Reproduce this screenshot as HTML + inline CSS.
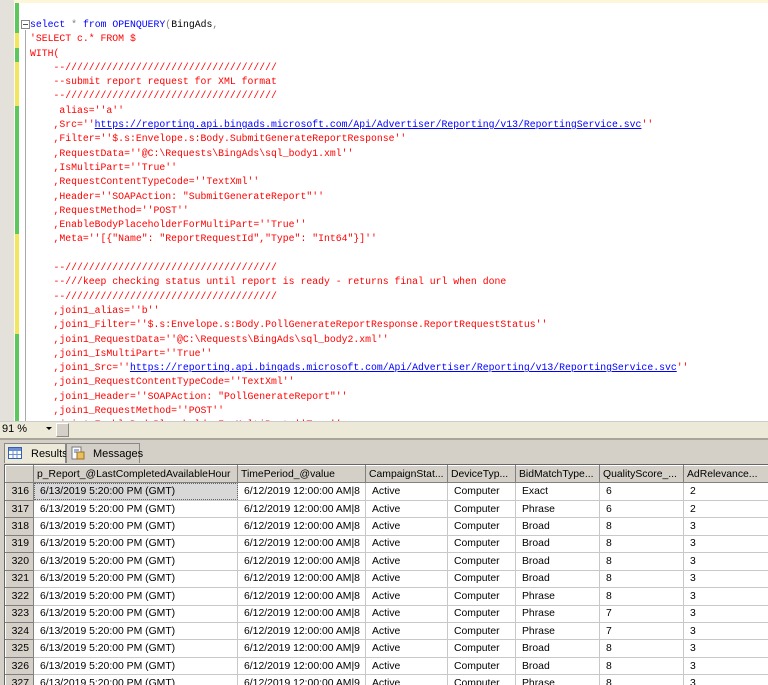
<!DOCTYPE html>
<html><head><style>
*{margin:0;padding:0;box-sizing:border-box}
body{width:768px;height:685px;overflow:hidden;background:#d4d0c8;position:relative;font-family:"Liberation Sans",sans-serif}
#ed{position:absolute;left:0;top:0;width:768px;height:421px;background:#fff;overflow:hidden}
#ed .top{position:absolute;left:0;top:0;width:768px;height:3px;background:#fdf6d8}
#ed .gut{position:absolute;left:0;top:0;width:14px;height:421px;background:#e4e1da}
.bar{position:absolute;left:15px;width:4px}
#code{position:absolute;left:30px;top:18px;font-family:"Liberation Mono",monospace;font-size:9.8px;line-height:14.3px;white-space:pre;color:#f00}
.k{color:#00f}.g{color:#808080}.b{color:#000}.u{color:#00f;text-decoration:underline}
.box{position:absolute;left:21px;top:20px;width:9px;height:9px;border:1px solid #888;background:#fff}
.box:after{content:"";position:absolute;left:1px;top:3px;width:5px;height:1px;background:#555}
.vl{position:absolute;left:25px;top:30px;width:1px;height:400px;background:#aaa}
#zb{position:absolute;top:421px;left:0;width:768px;height:17px;background:#ece9d8;border-top:1px solid #ccc}
#zb .z{position:absolute;left:2px;top:1px;font-size:11px}
#zb .dd{position:absolute;left:46px;top:5px;border-left:3px solid transparent;border-right:3px solid transparent;border-top:3px solid #000}
#zb .sb{position:absolute;left:56px;top:1px;width:13px;height:14px;background:#d4d0c8;border:1px solid #fff;border-right-color:#888;border-bottom-color:#888}
#sep{position:absolute;top:438px;left:0;width:768px;height:2px;background:#a9a59a}
.tab{position:absolute;top:443px;height:20px;font-size:11px;border:1px solid #888;border-bottom:none;background:#d4d0c8;padding:4px 0 0 26px}
#grid{position:absolute;left:4px;top:464px;width:764px;height:221px;background:#fff;border-left:1px solid #666;border-top:1px solid #666;overflow:hidden}
table{border-collapse:collapse;font-size:10.4px;table-layout:fixed;width:764px}
td{height:17.45px;border-right:1px solid #c8c8c8;border-bottom:1px solid #c8c8c8;padding:0 0 0 6px;white-space:nowrap;overflow:hidden}
tr.h td{background:#d4d0c8;border:1px solid #fff;border-right-color:#808080;border-bottom-color:#808080;padding-left:3px}
td.n{background:#d4d0c8;border:1px solid #fff;border-right-color:#808080;border-bottom-color:#808080;text-align:right;padding:0 4px 0 0}
</style></head><body>
<div id="ed">
<div class="top"></div><div class="gut"></div>
<div class="bar" style="top:3px;height:30px;background:#5cc85c"></div>
<div class="bar" style="top:33px;height:15px;background:#f2e65a"></div>
<div class="bar" style="top:48px;height:14px;background:#5cc85c"></div>
<div class="bar" style="top:62px;height:44px;background:#f2e65a"></div>
<div class="bar" style="top:106px;height:128px;background:#5cc85c"></div>
<div class="bar" style="top:234px;height:100px;background:#f2e65a"></div>
<div class="bar" style="top:334px;height:87px;background:#5cc85c"></div>
<div class="box"></div><div class="vl"></div>
<div id="code"><span class="k">select</span> <span class="g">*</span> <span class="k">from</span> <span class="k">OPENQUERY</span><span class="g">(</span><span class="b">BingAds</span><span class="g">,</span>
'SELECT c.* FROM $
WITH(
    --////////////////////////////////////
    --submit report request for XML format
    --////////////////////////////////////
     alias=''a''
    ,Src=''<span class="u">https://reporting.api.bingads.microsoft.com/Api/Advertiser/Reporting/v13/ReportingService.svc</span>''
    ,Filter=''$.s:Envelope.s:Body.SubmitGenerateReportResponse''
    ,RequestData=''@C:\Requests\BingAds\sql_body1.xml''
    ,IsMultiPart=''True''
    ,RequestContentTypeCode=''TextXml''
    ,Header=''SOAPAction: "SubmitGenerateReport"''
    ,RequestMethod=''POST''
    ,EnableBodyPlaceholderForMultiPart=''True''
    ,Meta=''[{"Name": "ReportRequestId","Type": "Int64"}]''

    --////////////////////////////////////
    --///keep checking status until report is ready - returns final url when done
    --////////////////////////////////////
    ,join1_alias=''b''
    ,join1_Filter=''$.s:Envelope.s:Body.PollGenerateReportResponse.ReportRequestStatus''
    ,join1_RequestData=''@C:\Requests\BingAds\sql_body2.xml''
    ,join1_IsMultiPart=''True''
    ,join1_Src=''<span class="u">https://reporting.api.bingads.microsoft.com/Api/Advertiser/Reporting/v13/ReportingService.svc</span>''
    ,join1_RequestContentTypeCode=''TextXml''
    ,join1_Header=''SOAPAction: "PollGenerateReport"''
    ,join1_RequestMethod=''POST''
    ,join1_EnableBodyPlaceholderForMultiPart=''True''</div>
</div>
<div id="zb"><span class="z">91 %</span><span class="dd"></span><span class="sb"></span></div>
<div id="sep"></div>
<div class="tab" style="left:4px;width:62px;background:#ece9d8">Results</div>
<div class="tab" style="left:66px;width:74px">Messages</div>
<svg style="position:absolute;left:8px;top:447px" width="14" height="12"><rect x="0.5" y="0.5" width="13" height="11" fill="#fff" stroke="#3060b0"/><rect x="1" y="1" width="12" height="3" fill="#6b8fd0"/><path d="M1 7.5H13M5 4V11M9 4V11" stroke="#6b8fd0"/></svg>
<svg style="position:absolute;left:71px;top:446px" width="14" height="14"><rect x="1" y="1" width="9" height="12" fill="#fff" stroke="#777"/><rect x="6" y="6" width="7" height="7" fill="#e8c060" stroke="#a07020"/><path d="M3 4h5M3 6h3" stroke="#4060c0"/></svg>
<div id="grid"><table>
<colgroup><col style="width:28px"><col style="width:204px"><col style="width:128px"><col style="width:82px"><col style="width:68px"><col style="width:84px"><col style="width:84px"><col style="width:86px"></colgroup>
<tr class="h"><td></td><td>p_Report_@LastCompletedAvailableHour</td><td>TimePeriod_@value</td><td>CampaignStat...</td><td>DeviceTyp...</td><td>BidMatchType...</td><td>QualityScore_...</td><td>AdRelevance...</td></tr>
<tr><td class="n">316</td><td style="background:#d8d8d8;outline:1px dotted #666;outline-offset:-1px">6/13/2019 5:20:00 PM (GMT)</td><td>6/12/2019 12:00:00 AM|8</td><td>Active</td><td>Computer</td><td>Exact</td><td>6</td><td>2</td></tr>
<tr><td class="n">317</td><td>6/13/2019 5:20:00 PM (GMT)</td><td>6/12/2019 12:00:00 AM|8</td><td>Active</td><td>Computer</td><td>Phrase</td><td>6</td><td>2</td></tr>
<tr><td class="n">318</td><td>6/13/2019 5:20:00 PM (GMT)</td><td>6/12/2019 12:00:00 AM|8</td><td>Active</td><td>Computer</td><td>Broad</td><td>8</td><td>3</td></tr>
<tr><td class="n">319</td><td>6/13/2019 5:20:00 PM (GMT)</td><td>6/12/2019 12:00:00 AM|8</td><td>Active</td><td>Computer</td><td>Broad</td><td>8</td><td>3</td></tr>
<tr><td class="n">320</td><td>6/13/2019 5:20:00 PM (GMT)</td><td>6/12/2019 12:00:00 AM|8</td><td>Active</td><td>Computer</td><td>Broad</td><td>8</td><td>3</td></tr>
<tr><td class="n">321</td><td>6/13/2019 5:20:00 PM (GMT)</td><td>6/12/2019 12:00:00 AM|8</td><td>Active</td><td>Computer</td><td>Broad</td><td>8</td><td>3</td></tr>
<tr><td class="n">322</td><td>6/13/2019 5:20:00 PM (GMT)</td><td>6/12/2019 12:00:00 AM|8</td><td>Active</td><td>Computer</td><td>Phrase</td><td>8</td><td>3</td></tr>
<tr><td class="n">323</td><td>6/13/2019 5:20:00 PM (GMT)</td><td>6/12/2019 12:00:00 AM|8</td><td>Active</td><td>Computer</td><td>Phrase</td><td>7</td><td>3</td></tr>
<tr><td class="n">324</td><td>6/13/2019 5:20:00 PM (GMT)</td><td>6/12/2019 12:00:00 AM|8</td><td>Active</td><td>Computer</td><td>Phrase</td><td>7</td><td>3</td></tr>
<tr><td class="n">325</td><td>6/13/2019 5:20:00 PM (GMT)</td><td>6/12/2019 12:00:00 AM|9</td><td>Active</td><td>Computer</td><td>Broad</td><td>8</td><td>3</td></tr>
<tr><td class="n">326</td><td>6/13/2019 5:20:00 PM (GMT)</td><td>6/12/2019 12:00:00 AM|9</td><td>Active</td><td>Computer</td><td>Broad</td><td>8</td><td>3</td></tr>
<tr><td class="n">327</td><td>6/13/2019 5:20:00 PM (GMT)</td><td>6/12/2019 12:00:00 AM|9</td><td>Active</td><td>Computer</td><td>Phrase</td><td>8</td><td>3</td></tr>
</table></div>
</body></html>
